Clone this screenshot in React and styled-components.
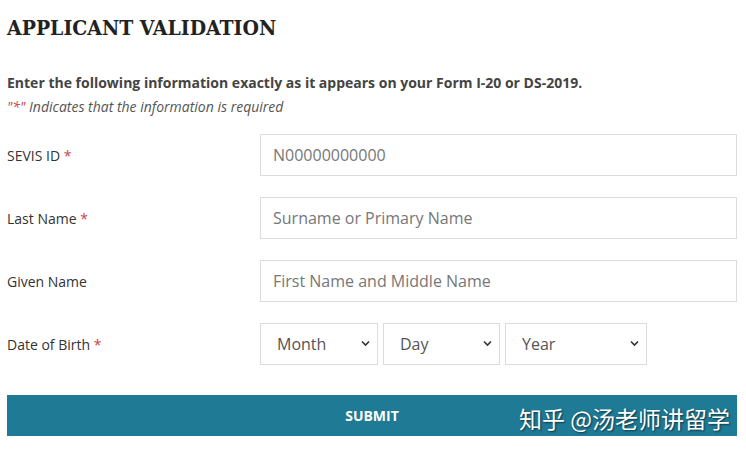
import React from "react";
import styled, { createGlobalStyle } from "styled-components";

const GlobalStyle = createGlobalStyle`
  body {
    margin: 0;
    background: #fff;
    font-family: "Open Sans", "Liberation Sans", sans-serif;
    color: #333;
  }
`;

const Page = styled.div`
  position: relative;
  width: 746px;
  height: 453px;
  padding: 14px 9px 0 7px;
  box-sizing: border-box;
`;

const Title = styled.h1`
  margin: 0;
  font-family: "DejaVu Serif", "Liberation Serif", serif;
  font-stretch: condensed;
  font-weight: bold;
  font-size: 21px;
  line-height: 28px;
  color: #222;
`;

const Lead = styled.p`
  margin: 31px 0 0;
  font-size: 14px;
  font-weight: 700;
  line-height: 20px;
  color: #444;
`;

const Note = styled.p`
  margin: 4px 0 0;
  font-size: 14px;
  font-style: italic;
  line-height: 20px;
  color: #555;
`;

const Star = styled.span`
  color: #c9434b;
`;

const Form = styled.form`
  margin-top: 17px;
  display: flex;
  flex-direction: column;
  gap: 21px;
`;

const Row = styled.div`
  display: grid;
  grid-template-columns: 253px 1fr;
  align-items: center;
`;

const Label = styled.label`
  font-size: 14px;
  color: #333;
`;

const Input = styled.input`
  height: 42px;
  box-sizing: border-box;
  border: 1px solid #dcdcdc;
  padding: 0 12px;
  font-family: inherit;
  font-size: 16px;
  color: #333;
  outline: none;
  &::placeholder {
    color: #777;
  }
`;

const Selects = styled.div`
  display: flex;
  gap: 5px;
`;

const SelectWrap = styled.div`
  position: relative;
  width: ${(p) => p.w}px;
  height: 42px;
  svg {
    position: absolute;
    right: 8px;
    top: 17px;
    pointer-events: none;
  }
`;

const Select = styled.select`
  appearance: none;
  width: 100%;
  height: 100%;
  box-sizing: border-box;
  border: 1px solid #dcdcdc;
  background: #fff;
  padding: 0 16px;
  font-family: inherit;
  font-size: 16px;
  color: #555;
  outline: none;
`;

const Submit = styled.button`
  margin-top: 9px;
  height: 41px;
  width: 100%;
  border: none;
  background: #1e7a95;
  color: #fff;
  font-family: inherit;
  font-weight: 700;
  font-size: 14px;
  padding-right: 6px;
`;

const Watermark = styled.div`
  position: absolute;
  left: 519px;
  top: 403px;
  font-family: "Noto Sans CJK SC", sans-serif;
  font-size: 23px;
  line-height: 30px;
  color: #fff;
  text-shadow: 1px 1px 2px rgba(0, 0, 0, 0.6);
  white-space: nowrap;
`;

const Chevron = () => (
  <svg width="9" height="7" viewBox="0 0 9 7">
    <path d="M1 1.5l3.5 3.5L8 1.5" fill="none" stroke="#333" strokeWidth="1.6" />
  </svg>
);

const DateSelect = ({ w, label }) => (
  <SelectWrap w={w}>
    <Select defaultValue="">
      <option value="">{label}</option>
    </Select>
    <Chevron />
  </SelectWrap>
);

export default function App() {
  return (
    <>
      <GlobalStyle />
      <Page>
        <Title>APPLICANT VALIDATION</Title>
        <Lead>Enter the following information exactly as it appears on your Form I-20 or DS-2019.</Lead>
        <Note>
          <Star>"*"</Star> Indicates that the information is required
        </Note>
        <Form onSubmit={(e) => e.preventDefault()}>
          <Row>
            <Label>
              SEVIS ID <Star>*</Star>
            </Label>
            <Input placeholder="N00000000000" />
          </Row>
          <Row>
            <Label>
              Last Name <Star>*</Star>
            </Label>
            <Input placeholder="Surname or Primary Name" />
          </Row>
          <Row>
            <Label>Given Name</Label>
            <Input placeholder="First Name and Middle Name" />
          </Row>
          <Row>
            <Label>
              Date of Birth <Star>*</Star>
            </Label>
            <Selects>
              <DateSelect w={118} label="Month" />
              <DateSelect w={117} label="Day" />
              <DateSelect w={142} label="Year" />
            </Selects>
          </Row>
          <Submit type="submit">SUBMIT</Submit>
        </Form>
        <Watermark>知乎 @汤老师讲留学</Watermark>
      </Page>
    </>
  );
}
